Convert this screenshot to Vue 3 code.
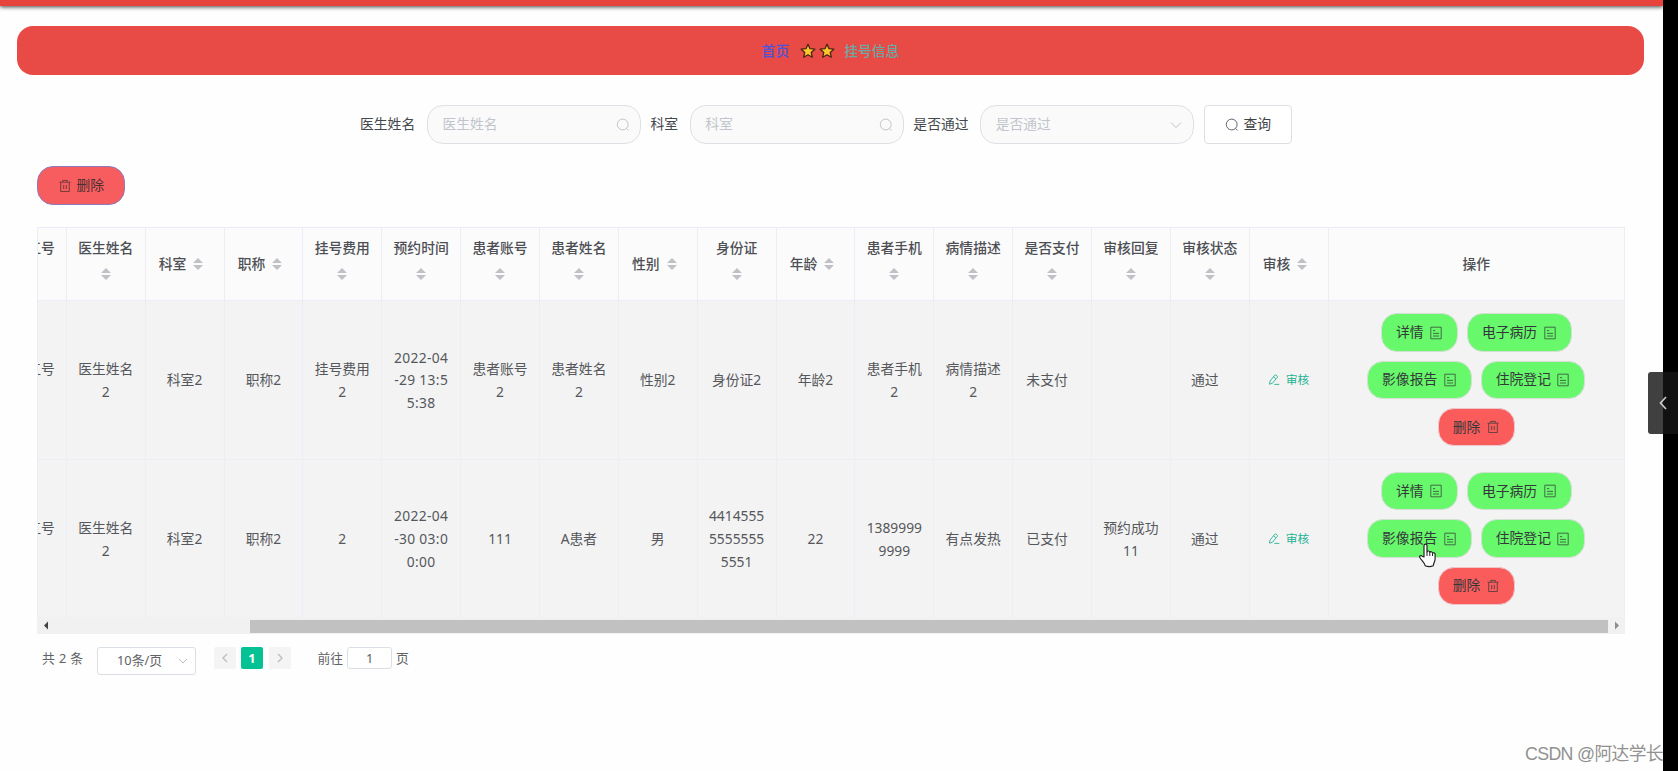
<script setup>
const columns = [
  { title: '医生姓名', wrap: true },
  { title: '科室' },
  { title: '职称' },
  { title: '挂号费用', wrap: true },
  { title: '预约时间', wrap: true },
  { title: '患者账号', wrap: true },
  { title: '患者姓名', wrap: true },
  { title: '性别' },
  { title: '身份证', wrap: true },
  { title: '年龄' },
  { title: '患者手机', wrap: true },
  { title: '病情描述', wrap: true },
  { title: '是否支付', wrap: true },
  { title: '审核回复', wrap: true },
  { title: '审核状态', wrap: true },
  { title: '审核' },
]
const rows = [
  ['医生姓名\n2', '科室2', '职称2', '挂号费用\n2', '2022-04\n-29 13:5\n5:38', '患者账号\n2', '患者姓名\n2', '性别2', '身份证2', '年龄2', '患者手机\n2', '病情描述\n2', '未支付', '', '通过'],
  ['医生姓名\n2', '科室2', '职称2', '2', '2022-04\n-30 03:0\n0:00', '111', 'A患者', '男', '4414555\n5555555\n5551', '22', '1389999\n9999', '有点发热', '已支付', '预约成功\n11', '通过'],
]
const actions = [['详情', '电子病历'], ['影像报告', '住院登记'], ['删除']]
const filters = [
  { label: '医生姓名', icon: 'search' },
  { label: '科室', icon: 'search' },
  { label: '是否通过', icon: 'arrow' },
]
</script>

<template>
  <div class="screen">
    <main class="page">
      <div class="topbar"></div>
      <nav class="banner">
        <span class="home">首页</span>
        <span class="stars">
          <svg v-for="n in 2" :key="n" width="16" height="16" viewBox="0 0 16 16"><path d="M8 1.3l2 4.4 4.8.5-3.6 3.2 1.1 4.8L8 11.700l-4.300 2.500 1.100-4.800L1.200 6.200 6 5.700z" fill="#fcc62d" stroke="#4b2417" stroke-width="1.300" stroke-linejoin="round" /></svg>
        </span>
        <span class="current">挂号信息</span>
      </nav>

      <form class="filters" @submit.prevent>
        <div v-for="f in filters" :key="f.label" class="field">
          <label>{{ f.label }}</label>
          <div class="box">
            <span>{{ f.label }}</span>
            <svg v-if="f.icon === 'search'" width="14" height="14" viewBox="0 0 14 14"><circle cx="6.700" cy="6.500" r="5.400" /><path d="M10.600 10.500l2 2" /></svg>
            <svg v-else width="14" height="14" viewBox="0 0 14 14"><path d="M2 4.500l5 5 5-5" /></svg>
          </div>
        </div>
        <button class="query" type="button">
          <svg width="14" height="14" viewBox="0 0 14 14"><circle cx="6.700" cy="6.500" r="5.400" /><path d="M10.600 10.500l2 2" /></svg><span>查询</span>
        </button>
      </form>

      <button class="btn red bulk" type="button">
        <svg class="ico" width="14" height="14" viewBox="0 0 14 14"><path d="M1.500 3.200h11M4.700 3V1.400h4.600V3M2.700 3.200v9.300h8.600V3.200M5.700 6v4M8.300 6v4" /></svg><span>删除</span>
      </button>

      <section class="table">
        <div class="row head">
          <div class="cell first"><div class="up">工号</div></div>
          <div v-for="c in columns" :key="c.title" class="cell">
            <div class="htext" :class="{ stack: c.wrap }">
              <span>{{ c.title }}</span>
              <svg class="caret" width="10" height="12" viewBox="0 0 10 12"><path d="M0 5L5 0l5 5zM0 7h10l-5 5z" fill="#c0c1c6" /></svg>
            </div>
          </div>
          <div class="cell ops">操作</div>
        </div>
        <div v-for="(r, i) in rows" :key="i" class="row body">
          <div class="cell first"><div class="up">工号</div></div>
          <div v-for="(t, j) in r" :key="j" class="cell" :class="{ date: j === 4, tag: j === 12 || j === 14 }">{{ t }}</div>
          <div class="cell audit">
            <svg width="12" height="12" viewBox="0 0 12 12"><path d="M1.500 10.200l.5-3.100L6.800 1.200c1-.9 3.300.8 2.400 2.200L4.500 9.200zM5.500 2.800l2.200 1.800M6.300 10.400h5" fill="none" stroke="currentColor" stroke-width=".9" /></svg>审核
          </div>
          <div class="cell ops">
            <div v-for="(line, k) in actions" :key="k" class="line">
              <button v-for="a in line" :key="a" type="button" class="btn" :class="a === '删除' ? 'red' : 'green'">
                <span>{{ a }}</span>
                <svg v-if="a === '删除'" class="ico" width="14" height="14" viewBox="0 0 14 14"><path d="M1.500 3.200h11M4.700 3V1.400h4.600V3M2.700 3.200v9.300h8.600V3.200M5.700 6v4M8.300 6v4" /></svg>
                <svg v-else class="ico" width="14" height="14" viewBox="0 0 14 14"><path d="M1.800 1.200h10.400v11.600H1.800zM4 4.600h2.200M4 7.400h6M4 10h6" /></svg>
              </button>
            </div>
          </div>
        </div>
        <div class="scrollbar">
          <svg width="13" height="9" viewBox="0 0 13 9"><path d="M11 .5v8L7 4.500z" fill="#444" /></svg>
          <div class="thumb"></div>
          <svg width="13" height="9" viewBox="0 0 13 9"><path d="M3 .5v8l4-4z" fill="#8d8d8d" /></svg>
        </div>
      </section>

      <footer class="pager">
        <span class="total">共 2 条</span>
        <div class="size"><span>10条/页</span><svg width="10" height="10" viewBox="0 0 10 10"><path d="M1 3l4 4 4-4" /></svg></div>
        <div class="num"><svg width="10" height="10" viewBox="0 0 10 10"><path d="M7 1L3 5l4 4" /></svg></div>
        <div class="num on">1</div>
        <div class="num"><svg width="10" height="10" viewBox="0 0 10 10"><path d="M3 1l4 4-4 4" /></svg></div>
        <span class="goto">前往</span>
        <div class="jump">1</div>
        <span>页</span>
      </footer>
    </main>
    <aside class="edge"></aside>

    <div class="drawer"><svg width="10" height="16" viewBox="0 0 10 16"><path d="M8 2L2.500 8 8 14" fill="none" stroke="#c8c8c8" stroke-width="1.700" /></svg></div>
    <svg class="cursor" width="21" height="25" viewBox="0 0 21 25"><path d="M7 14V3c0-2.400 3-2.400 3 0v6c.2-1.500 2.800-1.300 2.800.5.5-1.300 2.700-1 2.700.8.600-1 2.600-.6 2.600 1v5c0 2-1.600 3.500-1.800 6.500-2.500 1-6 .9-8 0-.5-3-3.500-5-5.500-8.300-.8-1.600 1.200-2.500 2.400-1.300z" fill="#fff" stroke="#222" stroke-width="1.200" stroke-linejoin="round" /><path d="M10 9v4M12.800 9.500V13M15.500 10.300V13" stroke="#222" stroke-width="1" /></svg>
    <div class="watermark">CSDN @阿达学长</div>
  </div>
</template>

<style>
body { margin: 0; overflow: hidden; }
</style>

<style scoped>
.screen {
  position: relative; display: flex; width: 1678px; height: 771px; overflow: hidden; background: #fefefe;
  font-family: "Noto Sans", "Noto Sans CJK SC", sans-serif; font-size: 13.8px; color: #55575b;
}
.page { width: 1663px; }
.edge { width: 15px; background: #000; }
button { font: inherit; margin: 0; padding: 0; box-sizing: border-box; }
.topbar { height: 6px; background: #e8423d; box-shadow: 0 1px 4px rgba(0, 0, 0, .75); }
.banner {
  height: 49px; margin: 20px 19px 0 17px; border-radius: 16px; background: #e84a45;
  display: flex; align-items: center; justify-content: center;
}
.home, .current { font-weight: 500; padding-bottom: 2px; }
.home { color: #4a55dc; }
.current { color: #6aa9a4; }
.stars { display: flex; gap: 3px; margin: 0 9.500px 0 10.500px; }
.filters { display: flex; margin: 30px 0 0 360px; height: 39px; align-items: center; color: #45484d; }
.field { display: flex; align-items: center; margin-right: 9.600px; }
.field label, .box span, .query span, .bulk span { padding-bottom: 3px; }
.box {
  display: flex; align-items: center; justify-content: space-between; box-sizing: border-box;
  width: 214px; height: 39px; margin-left: 11.700px; padding: 0 10px 0 14.500px;
  border: 1px solid #dfe0e6; border-radius: 16px; background: #fafafa; color: #c2c5cc;
}
.box svg, .query svg { fill: none; stroke: #bfc3ca; stroke-width: 1; }
.query {
  display: flex; align-items: center; justify-content: center; gap: 5px; width: 88px; height: 39px;
  border: 1px solid #dedfe4; border-radius: 4px; background: #fff; color: #3f4145;
}
.query svg { stroke: #606266; }
.btn {
  display: flex; align-items: center; gap: 5.500px; height: 38.500px; padding: 0 14px; border-radius: 16px;
  border: 1px solid #d5e0d5; color: #34383a;
}
.green { background: #67f86b; }
.red { background: #fa5c5c; border-color: #ecc6c8; }
.ico { fill: none; stroke: currentColor; stroke-width: .9; opacity: .8; }
.bulk { width: 88px; height: 39px; margin: 22px 0 0 37px; justify-content: center; border-color: #8b7bbd; background: #f75d5e; color: #4a3032; gap: 4.500px; }
.table { width: 1588px; margin: 22px 0 0 37px; box-sizing: border-box; border-top: 1px solid #ebecf5; background: #f3f3f3; }
.row { display: grid; grid-template-columns: 29.800px repeat(16, 78.870px) 1fr; box-sizing: border-box; }
.head { height: 73px; background: #fbfbfb; color: #4d4f54; font-weight: 500; border-bottom: 1px solid #ebecf5; }
.body { height: 158.700px; border-bottom: 1px solid #ecedf5; }
.body:nth-child(3) { height: 157.700px; border-bottom: 0; }
.cell {
  display: flex; align-items: center; justify-content: center; box-sizing: border-box; border-right: 1px solid #ecedf5;
  white-space: pre; text-align: center; line-height: 22.700px; overflow: hidden;
}
.body .cell { padding-top: 2px; }
.first { justify-content: flex-end; border-left: 1px solid #ecedf5; }
.up { display: flex; padding-right: 11px; flex: none; }
.body .up { padding-bottom: 22px; }
.head .up { padding-bottom: 32px; }
.htext { display: flex; align-items: center; }
.htext .caret { margin: 1px 7px 0; }
.htext.stack { flex-direction: column; gap: 8px; padding-bottom: 11px; }
.date { letter-spacing: .35px; }
.body .tag { padding-right: 10px; }
.body .audit { color: #26b494; font-size: 11.800px; gap: 6px; padding: 0 0 0 3px; }
.ops { flex-direction: column; gap: 8.800px; }
.body .ops { padding-top: 0; }
.line { display: flex; gap: 9px; }
.line .btn { line-height: 20px; white-space: nowrap; }
.line .btn span { padding-bottom: 1px; }
.scrollbar { display: flex; align-items: center; height: 17px; background: #f1f1f2; }
.thumb { flex: 1; height: 13px; margin: 1px 4px 0 200px; background: #c1c1c1; }
.pager { display: flex; margin: 13px 0 0 42px; font-size: 12.800px; line-height: 22px; color: #606266; height: 28px; }
.total { width: 55px; white-space: nowrap; word-spacing: .8px; }
.size, .jump { box-sizing: border-box; border: 1px solid #dcdee5; border-radius: 3px; background: #fff; }
.size { width: 99px; height: 28px; display: flex; align-items: center; justify-content: space-between; padding: 0 7px 0 19px; margin-right: 17.500px; }
.size span { padding-bottom: 2px; }
.pager svg { fill: none; stroke: #b9bcc3; stroke-width: 1; }
.num { width: 22px; height: 22px; margin-right: 5.500px; border-radius: 2px; background: #f4f4f5; display: flex; align-items: center; justify-content: center; }
.num svg { stroke-width: 1.300; }
.num.on { background: #04c293; color: #fff; font-weight: 700; }
.goto { margin-left: 21.500px; }
.jump { width: 45px; height: 22px; line-height: 20px; margin: 0 4px; text-align: center; }
.drawer {
  position: absolute; left: 1648px; top: 372px; width: 30px; height: 62px; border-radius: 3px 0 0 3px;
  display: flex; align-items: center; justify-content: center; background: linear-gradient(90deg, #404040 50%, #111 50%);
}
.cursor { position: absolute; left: 1417px; top: 543px; }
.watermark {
  position: absolute; right: 15px; top: 740px; font-family: "Liberation Sans", "Noto Sans CJK SC", sans-serif;
  font-size: 17.800px; letter-spacing: -.65px; line-height: 28px; color: #919191; white-space: nowrap;
}
</style>
